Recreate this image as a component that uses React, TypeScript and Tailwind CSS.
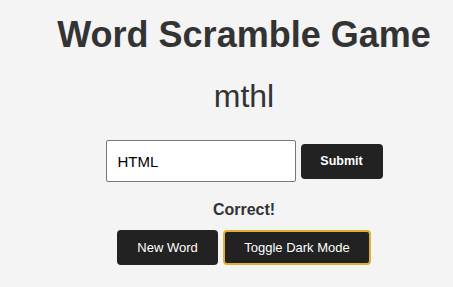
import { useState } from 'react'

export default function App() {
  const [guess, setGuess] = useState('HTML')

  return (
    <div
      className="min-h-screen bg-[#f4f4f4] text-[#333]"
      style={{ fontFamily: '"Liberation Sans", Arial, sans-serif' }}
    >
      <div className="flex flex-col items-center pl-[35px]">
        {/* Title */}
        <h1 className="mt-[14px] text-[36px] font-bold leading-[42px]">Word Scramble Game</h1>

        {/* Scrambled word */}
        <p className="mt-[22px] text-[32px] leading-[37px]">mthl</p>

        {/* Guess form */}
        <div className="mt-[25px] flex items-center gap-[5px]">
          <input
            value={guess}
            onChange={e => setGuess(e.target.value)}
            className="h-[42px] w-[190px] rounded-[2px] border border-[#767676] bg-white pl-[11px] text-[15px] text-black outline-none"
          />
          <button className="h-[35px] w-[82px] rounded-[4px] bg-[#222] text-[12.5px] font-bold text-white">
            Submit
          </button>
        </div>

        {/* Result */}
        <p className="mt-[19px] text-[16px] font-bold leading-[18px]">Correct!</p>

        <div className="mt-[11px] flex gap-[5px]">
          <button className="h-[35px] w-[101px] rounded-[4px] border-2 border-[#222] bg-[#222] text-[13px] text-white">
            New Word
          </button>
          <button className="h-[35px] w-[148px] rounded-[4px] border-2 border-[#e0b030] bg-[#222] text-[13px] text-white">
            Toggle Dark Mode
          </button>
        </div>
      </div>
    </div>
  )
}
